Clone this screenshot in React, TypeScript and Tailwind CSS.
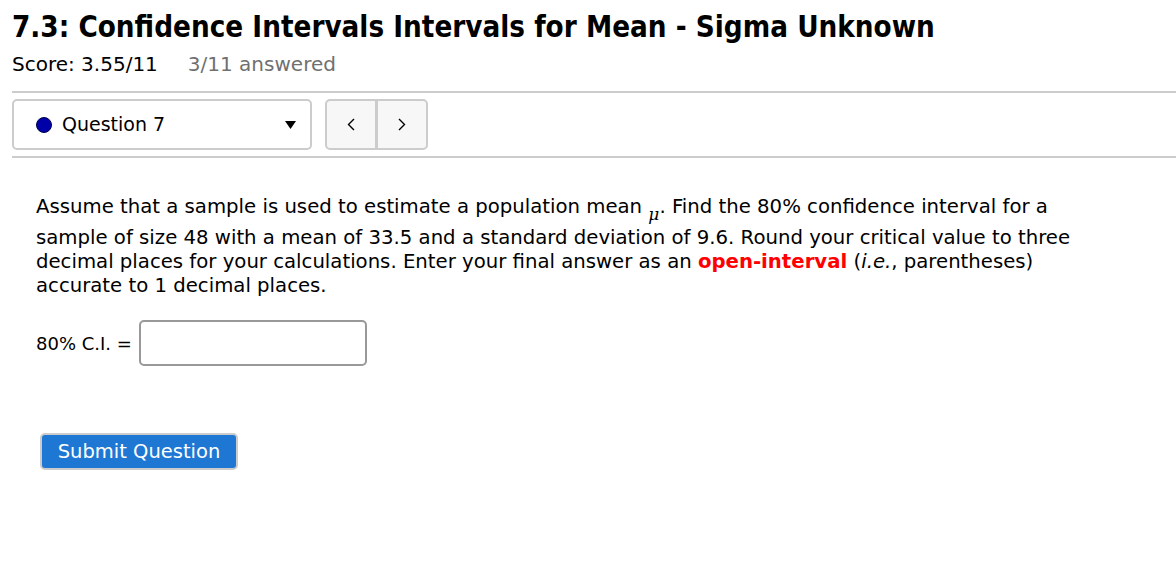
import { useState } from "react"

export default function App() {
  const [answer, setAnswer] = useState("")

  return (
    <div className="min-h-screen bg-white text-black font-['DejaVu_Sans',sans-serif]">
      {/* Header */}
      <div className="px-3 pt-[9px]">
        <h1 className="font-['DejaVu_Sans_Condensed','DejaVu_Sans',sans-serif] text-[29.3px] font-bold leading-[36px]">
          7.3: Confidence Intervals Intervals for Mean - Sigma Unknown
        </h1>
        <div className="mt-[5px] flex gap-[30px] text-[20px] leading-[28px]">
          <span>Score: 3.55/11</span>
          <span className="text-[#707070]">3/11 answered</span>
        </div>
      </div>

      <div className="ml-3 mt-[13px] border-t-2 border-[#cccccc]" />

      {/* Question nav */}
      <div className="flex gap-[13px] px-3 py-[6px]">
        <button className="flex h-[51px] w-[300px] items-center rounded-[5px] border-2 border-[#cccccc] bg-white pl-[22px] pr-[12px] text-[19px]">
          <span className="h-4 w-4 rounded-full border border-[#000050] bg-[#0000a8]" />
          <span className="ml-[10px] flex-1 text-left">Question 7</span>
          <svg width="11" height="8" viewBox="0 0 11 8" className="mr-[2px]">
            <path d="M0 0 H11 L5.5 8 Z" fill="#000" />
          </svg>
        </button>
        <div className="flex h-[51px] w-[103px] overflow-hidden rounded-[5px] border-2 border-[#cccccc] bg-[#f7f7f7]">
          <button className="flex flex-1 items-center justify-center border-r-[3px] border-[#cccccc]">
            <svg width="8" height="13" viewBox="0 0 8 13">
              <path d="M7 1 L1.5 6.5 L7 12" fill="none" stroke="#000" strokeWidth="1.4" />
            </svg>
          </button>
          <button className="flex flex-1 items-center justify-center">
            <svg width="8" height="13" viewBox="0 0 8 13">
              <path d="M1 1 L6.5 6.5 L1 12" fill="none" stroke="#000" strokeWidth="1.4" />
            </svg>
          </button>
        </div>
      </div>

      <div className="ml-3 border-t-2 border-[#cccccc]" />

      {/* Question body */}
      <div className="pl-9 pt-[37px] text-[19.7px]">
        <p className="leading-[24px] whitespace-nowrap">
          Assume that a sample is used to estimate a population mean{" "}
          <span className="align-[-7px] font-['DejaVu_Serif',serif] text-[17px] italic">μ</span>. Find the 80% confidence
          interval for a
          <br />
          sample of size 48 with a mean of 33.5 and a standard deviation of 9.6. Round your critical value to three
          <br />
          decimal places for your calculations. Enter your final answer as an{" "}
          <span className="font-bold text-[#ff0000]">open-interval</span> (<i>i.e.</i>, parentheses)
          <br />
          accurate to 1 decimal places.
        </p>

        <div className="mt-[22px] flex items-center gap-[7px]">
          <span className="text-[18px]">80% C.I. =</span>
          <input
            value={answer}
            onChange={(e) => setAnswer(e.target.value)}
            className="h-[46px] w-[228px] rounded-[5px] border-2 border-[#999999] bg-white px-2 outline-none"
          />
        </div>

        <button className="ml-[4px] mt-[67px] h-[37px] w-[198px] rounded-[5px] border-2 border-[#cccccc] bg-[#1e77d3] text-[19.5px] leading-none text-white">
          Submit Question
        </button>
      </div>
    </div>
  )
}
